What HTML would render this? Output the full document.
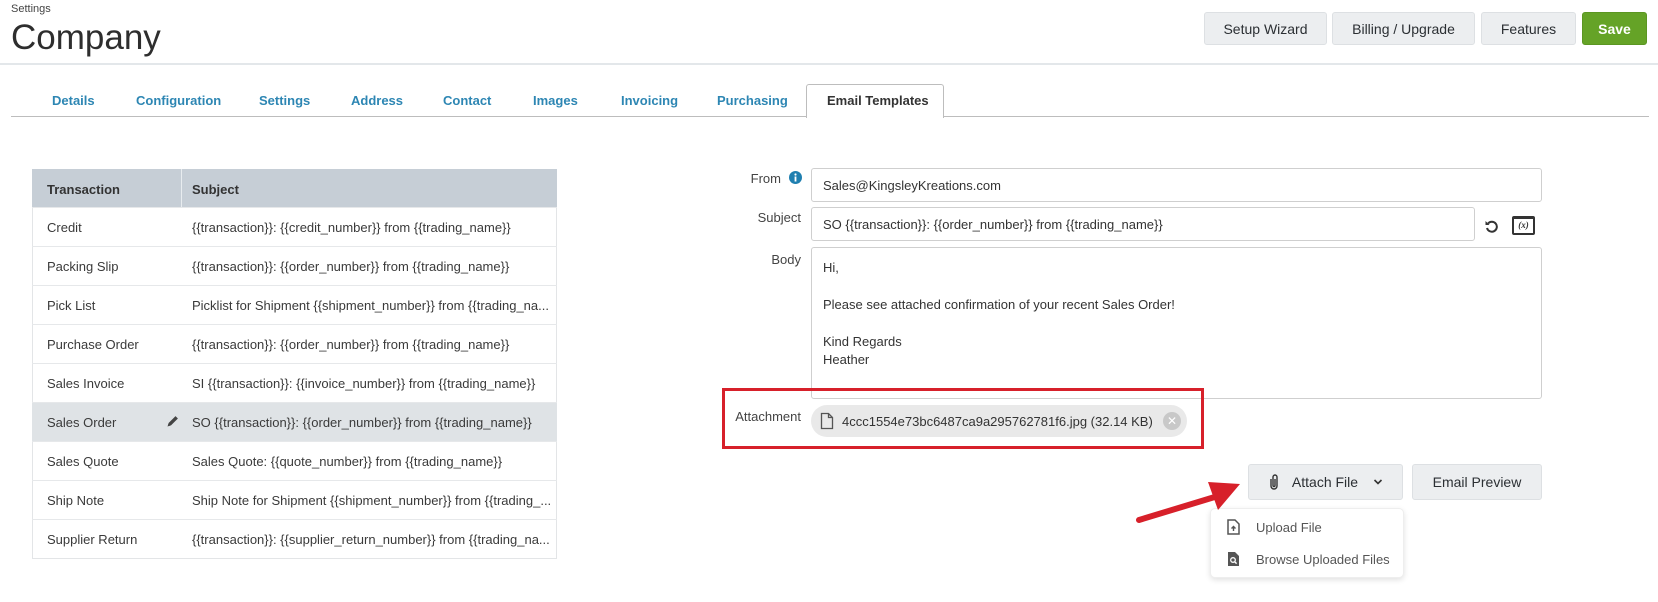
<!DOCTYPE html>
<html><head><meta charset="utf-8"><style>
*{box-sizing:border-box;margin:0;padding:0}
body{width:1658px;height:602px;background:#fff;font-family:"Liberation Sans",Arial,sans-serif;color:#333;position:relative;overflow:hidden;font-size:13px}
.a{position:absolute;white-space:nowrap}
.btn{position:absolute;background:#eceef0;border:1px solid #dde0e3;border-radius:3px;font-size:14px;color:#2b2f33;display:flex;align-items:center;justify-content:center}
.tab{position:absolute;top:93px;font-size:13px;font-weight:bold;color:#2d86b3}
.row{position:absolute;left:32px;width:525px;height:39px;border-top:1px solid #e6e8ea;font-size:13px;color:#3a3a3a}
.row span{position:absolute;top:12px}
.inp{position:absolute;border:1px solid #cfcfcf;border-radius:3px;background:#fff;font-size:13px;color:#333}
.lbl{position:absolute;font-size:13px;color:#444;text-align:right;width:100px}
</style></head><body>
<div class="a" style="left:11px;top:3px;font-size:11px;color:#444">Settings</div>
<div class="a" style="left:11px;top:18px;font-size:35px;color:#2e2e2e">Company</div>
<div class="btn" style="left:1204px;top:12px;width:123px;height:33px">Setup Wizard</div>
<div class="btn" style="left:1332px;top:12px;width:143px;height:33px">Billing / Upgrade</div>
<div class="btn" style="left:1481px;top:12px;width:95px;height:33px">Features</div>
<div class="btn" style="left:1582px;top:12px;width:65px;height:33px;background:#65a327;border-color:#5b9622;color:#fff;font-weight:bold">Save</div>
<div class="a" style="left:0;top:63px;width:1658px;height:2px;background:#e3e7ea"></div>

<div class="a" style="left:11px;top:116px;width:1638px;height:1px;background:#bdbdbd"></div>
<div class="tab" style="left:52px">Details</div>
<div class="tab" style="left:136px">Configuration</div>
<div class="tab" style="left:259px">Settings</div>
<div class="tab" style="left:351px">Address</div>
<div class="tab" style="left:443px">Contact</div>
<div class="tab" style="left:533px">Images</div>
<div class="tab" style="left:621px">Invoicing</div>
<div class="tab" style="left:717px">Purchasing</div>
<div class="a" style="left:806px;top:84px;width:138px;height:34px;background:#fff;border:1px solid #bdbdbd;border-bottom:none;border-radius:3px 3px 0 0"></div>
<div class="tab" style="left:827px;color:#333">Email Templates</div>

<div class="a" style="left:32px;top:169px;width:525px;height:390px;border:1px solid #e3e5e7"></div>
<div class="a" style="left:32px;top:169px;width:525px;height:38px;background:#c6ced6"></div>
<div class="a" style="left:181px;top:169px;width:1px;height:38px;background:#e8ecef"></div>
<div class="a" style="left:47px;top:182px;font-weight:bold;font-size:13px;color:#333">Transaction</div>
<div class="a" style="left:192px;top:182px;font-weight:bold;font-size:13px;color:#333">Subject</div>
<div class="row" style="top:207px"><span style="left:15px">Credit</span><span style="left:160px">{{transaction}}: {{credit_number}} from {{trading_name}}</span></div>
<div class="row" style="top:246px"><span style="left:15px">Packing Slip</span><span style="left:160px">{{transaction}}: {{order_number}} from {{trading_name}}</span></div>
<div class="row" style="top:285px"><span style="left:15px">Pick List</span><span style="left:160px">Picklist for Shipment {{shipment_number}} from {{trading_na...</span></div>
<div class="row" style="top:324px"><span style="left:15px">Purchase Order</span><span style="left:160px">{{transaction}}: {{order_number}} from {{trading_name}}</span></div>
<div class="row" style="top:363px"><span style="left:15px">Sales Invoice</span><span style="left:160px">SI {{transaction}}: {{invoice_number}} from {{trading_name}}</span></div>
<div class="row" style="top:402px;background:#dfe3e6"><span style="left:15px">Sales Order</span><span style="left:134px;top:11px"><svg width="14" height="14" viewBox="0 0 14 14"><path d="M2 12l.6-3L9.5 2.1l2.4 2.4L5 11.4z" fill="#444"/><path d="M1.5 12.5l1-3 2 2z" fill="#444"/></svg></span><span style="left:160px">SO {{transaction}}: {{order_number}} from {{trading_name}}</span></div>
<div class="row" style="top:441px"><span style="left:15px">Sales Quote</span><span style="left:160px">Sales Quote: {{quote_number}} from {{trading_name}}</span></div>
<div class="row" style="top:480px"><span style="left:15px">Ship Note</span><span style="left:160px">Ship Note for Shipment {{shipment_number}} from {{trading_...</span></div>
<div class="row" style="top:519px"><span style="left:15px">Supplier Return</span><span style="left:160px">{{transaction}}: {{supplier_return_number}} from {{trading_na...</span></div>

<div class="lbl" style="left:681px;top:171px">From</div>
<svg class="a" style="left:789px;top:171px" width="13" height="13" viewBox="0 0 13 13"><circle cx="6.5" cy="6.5" r="6.5" fill="#1f7fb0"/><rect x="5.6" y="5.5" width="1.8" height="5" fill="#fff"/><circle cx="6.5" cy="3.5" r="1.1" fill="#fff"/></svg>
<div class="inp" style="left:811px;top:168px;width:731px;height:34px;padding:9px 11px">Sales@KingsleyKreations.com</div>
<div class="lbl" style="left:701px;top:210px">Subject</div>
<div class="inp" style="left:811px;top:207px;width:664px;height:34px;padding:9px 11px">SO {{transaction}}: {{order_number}} from {{trading_name}}</div>
<svg class="a" style="left:1484px;top:218px" width="14" height="16" viewBox="0 0 14 16"><path d="M4 5.5A5 5 0 1 1 3 10" fill="none" stroke="#333" stroke-width="2"/><path d="M1.5 3v4h4z" fill="#333"/></svg>
<div class="a" style="left:1512px;top:216px;width:23px;height:19px;border:2px solid #333;border-top-width:3px;border-radius:2px;font-size:9px;font-style:italic;font-family:'Liberation Serif',serif;font-weight:bold;text-align:center;line-height:13px">(x)</div>
<div class="lbl" style="left:701px;top:252px">Body</div>
<div class="inp" style="left:811px;top:247px;width:731px;height:152px">
<div class="a" style="left:11px;top:12px">Hi,</div>
<div class="a" style="left:11px;top:49px">Please see attached confirmation of your recent Sales Order!</div>
<div class="a" style="left:11px;top:86px">Kind Regards</div>
<div class="a" style="left:11px;top:104px">Heather</div>
</div>
<div class="lbl" style="left:701px;top:409px">Attachment</div>
<div class="a" style="left:811px;top:405px;width:376px;height:32px;background:#e9e9e9;border-radius:16px"></div>
<svg class="a" style="left:820px;top:412px" width="14" height="18" viewBox="0 0 14 18"><path d="M1.5 1.5h7l4 4v11h-11z M8.5 1.5v4h4" fill="none" stroke="#555" stroke-width="1.3"/></svg>
<div class="a" style="left:842px;top:414px;font-size:13px">4ccc1554e73bc6487ca9a295762781f6.jpg (32.14 KB)</div>
<div class="a" style="left:1163px;top:412px;width:18px;height:18px;border-radius:50%;background:#c8c8c8;color:#fff;font-size:12px;text-align:center;line-height:18px">✕</div>
<div class="a" style="left:722px;top:388px;width:482px;height:61px;border:3px solid #d7202a"></div>

<div class="btn" style="left:1248px;top:464px;width:155px;height:36px;font-size:14px"><svg width="12" height="18" viewBox="0 0 12 18" style="margin-right:12px"><path d="M3 6v7a3 3 0 0 0 6 0V4a2 2 0 0 0-4 0v8.5a1 1 0 0 0 2 0V6" fill="none" stroke="#333" stroke-width="1.4"/></svg>Attach File<svg width="10" height="8" viewBox="0 0 10 8" style="margin-left:15px"><path d="M1.5 2l3.5 3.5L8.5 2" fill="none" stroke="#333" stroke-width="1.6"/></svg></div>
<div class="btn" style="left:1412px;top:464px;width:130px;height:36px">Email Preview</div>
<div class="a" style="left:1210px;top:508px;width:194px;height:70px;background:#fff;border:1px solid #eee;border-radius:5px;box-shadow:0 2px 6px rgba(0,0,0,.12)"></div>
<svg class="a" style="left:1227px;top:519px" width="13" height="16" viewBox="0 0 13 16"><path d="M1 1h7l4 4v10H1z" fill="none" stroke="#555" stroke-width="1.5"/><path d="M6.5 12V7.5M4.5 9.5l2-2 2 2" fill="none" stroke="#555" stroke-width="1.4"/></svg>
<div class="a" style="left:1256px;top:520px;font-size:13px;color:#555">Upload File</div>
<svg class="a" style="left:1227px;top:551px" width="13" height="16" viewBox="0 0 13 16"><path d="M1 1h7l4 4v10H1z" fill="#555"/><circle cx="6" cy="9" r="2.3" fill="none" stroke="#fff" stroke-width="1.3"/><path d="M7.6 10.6l2 2" stroke="#fff" stroke-width="1.4"/></svg>
<div class="a" style="left:1256px;top:552px;font-size:13px;color:#555">Browse Uploaded Files</div>

<svg class="a" style="left:1130px;top:470px" width="120" height="60" viewBox="0 0 120 60"><path d="M9 50L88 26" stroke="#d7202a" stroke-width="6" stroke-linecap="round"/><path d="M110 14L78 12L88 40z" fill="#d7202a"/></svg>
</body></html>
